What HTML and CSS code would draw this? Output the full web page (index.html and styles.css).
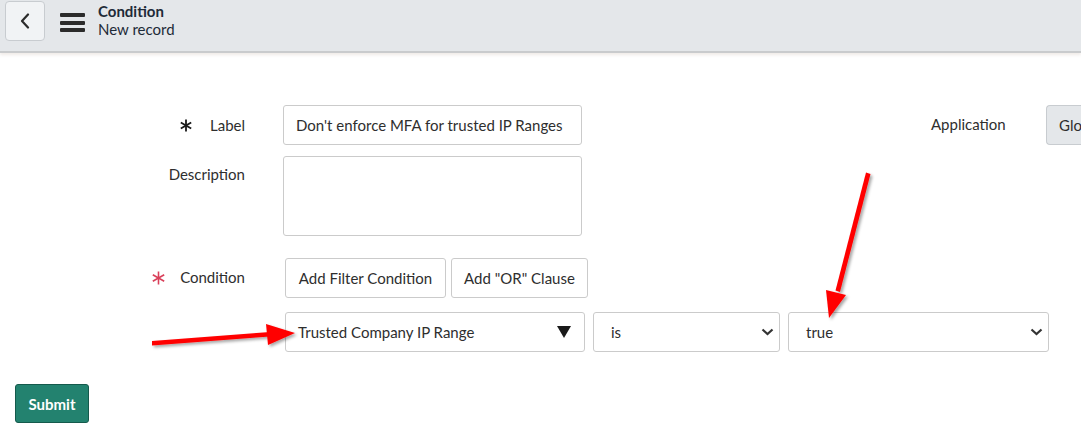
FILE: index.html
```html
<!DOCTYPE html>
<html lang="en">
<head>
<meta charset="utf-8">
<title>Condition - New record</title>
<link rel="stylesheet" href="styles.css">
</head>
<body>
<header class="header">
  <button class="back-btn" aria-label="Back">
    <svg width="10" height="16" viewBox="0 0 10 16"><path d="M8 1.5 L2 8 L8 14.5" fill="none" stroke="#2b2b2b" stroke-width="2.2" stroke-linecap="round" stroke-linejoin="round"/></svg>
  </button>
  <div class="menu-icon"><span></span><span></span><span></span></div>
  <div class="title">
    <div class="title-main">Condition</div>
    <div class="title-sub">New record</div>
  </div>
</header>

<main class="form">
  <div class="row row-label">
    <div class="label-cell"><svg class="mand" width="12" height="13" viewBox="0 0 12 13"><g stroke="#1a1a1a" stroke-width="1.8"><path d="M6 0.5 V12.5"/><path d="M0.8 3.5 L11.2 9.5"/><path d="M0.8 9.5 L11.2 3.5"/></g></svg>Label</div>
    <div class="field-cell"><div class="input">Don't enforce MFA for trusted IP Ranges</div></div>
    <div class="app-label">Application</div>
    <div class="app-box">Glo</div>
  </div>
  <div class="row row-desc">
    <div class="label-cell">Description</div>
    <div class="field-cell"><div class="textarea"></div></div>
  </div>
  <div class="row row-cond">
    <div class="label-cell"><svg class="mand mand-red" width="13" height="14" viewBox="0 0 13 14"><g stroke="#d9405a" stroke-width="1.6"><path d="M6.5 0.5 V13.5"/><path d="M0.8 3.7 L12.2 10.3"/><path d="M0.8 10.3 L12.2 3.7"/></g></svg>Condition</div>
    <div class="field-cell cond-cell">
      <div class="btn-row">
        <button class="btn btn-filter">Add Filter Condition</button>
        <button class="btn btn-or">Add "OR" Clause</button>
      </div>
    </div>
  </div>
  <div class="row row-select">
    <div class="label-cell"></div>
    <div class="field-cell cond-cell">
      <div class="select-row">
        <div class="select sel-field"><span>Trusted Company IP Range</span><svg class="tri" width="14" height="12" viewBox="0 0 14 12"><path d="M0 0 H14 L7 12 Z" fill="#1a1a1a"/></svg></div>
        <div class="select sel-op"><span>is</span><svg class="chev" width="13" height="8" viewBox="0 0 13 8"><path d="M1.5 1.5 L6.5 6 L11.5 1.5" fill="none" stroke="#333" stroke-width="2.2"/></svg></div>
        <div class="select sel-val"><span>true</span><svg class="chev" width="13" height="8" viewBox="0 0 13 8"><path d="M1.5 1.5 L6.5 6 L11.5 1.5" fill="none" stroke="#333" stroke-width="2.2"/></svg></div>
      </div>
    </div>
  </div>
  <div class="submit-row">
    <button class="submit">Submit</button>
  </div>
</main>

<svg class="arrows" width="1081" height="439" viewBox="0 0 1081 439">
  <defs>
    <filter id="sh" x="-20%" y="-20%" width="140%" height="140%">
      <feDropShadow dx="2" dy="2" stdDeviation="1.5" flood-color="#000" flood-opacity="0.35"/>
    </filter>
  </defs>
  <g filter="url(#sh)" fill="#ff0000" stroke="none">
    <path d="M152 341 L270 332 L270 336.5 L152 345.5 Z"/>
    <path d="M266 324 L295 333 L268 345 Z"/>
    <path d="M866 172.5 L870.5 174 L840 292 L835.5 290.5 Z"/>
    <path d="M826 290 L846 295 L829 318 Z"/>
  </g>
</svg>
</body>
</html>
```

FILE: styles.css
```css
html, body {
  margin: 0;
  padding: 0;
  background: #ffffff;
  overflow: hidden;
}
body {
  font-family: "Source Sans Pro", "Lato", "Liberation Sans", sans-serif;
  color: #2e2e2e;
  font-size: 15px;
  width: 1081px;
  height: 439px;
  position: relative;
}
button {
  font-family: inherit;
}

/* Header */
.header {
  height: 51px;
  background: #e4e7ea;
  border-bottom: 2px solid #c9cbcd;
  box-shadow: 0 2px 3px rgba(120, 80, 60, 0.12);
  display: flex;
  align-items: flex-start;
  padding-left: 5px;
  box-sizing: content-box;
}
.back-btn {
  width: 40px;
  height: 40px;
  margin-top: 1px;
  background: #f1f3f5;
  border: 1px solid #c8ccd0;
  border-radius: 4px;
  display: flex;
  align-items: center;
  justify-content: center;
  padding: 0;
}
.menu-icon {
  margin-left: 15px;
  margin-top: 13px;
  width: 25px;
  display: flex;
  flex-direction: column;
  gap: 3.5px;
}
.menu-icon span {
  display: block;
  height: 4px;
  background: #2b2b2b;
  border-radius: 1px;
}
.title {
  margin-left: 13px;
  margin-top: 2px;
  line-height: 18px;
  color: #1e2b38;
}
.title-main {
  font-weight: 700;
  font-size: 15px;
}
.title-sub {
  font-size: 15px;
}

/* Form */
.form {
  padding-top: 52px;
}
.row {
  display: flex;
  align-items: flex-start;
}
.label-cell {
  width: 245px;
  text-align: right;
  padding-top: 9px;
  line-height: 22px;
  font-size: 15px;
  color: #2e2e2e;
  flex-shrink: 0;
}
.mand {
  display: inline-block;
  vertical-align: -1px;
  margin-right: 18px;
}
.mand-red {
  margin-right: 15px;
  vertical-align: -2px;
}
.field-cell {
  margin-left: 38px;
  flex-shrink: 0;
}
.input {
  width: 299px;
  height: 40px;
  box-sizing: border-box;
  border: 1px solid #cbcbcb;
  border-radius: 3px;
  padding: 0 12px;
  line-height: 38px;
  font-size: 15px;
  white-space: nowrap;
  overflow: hidden;
}
.app-label {
  margin-left: 349px;
  width: 115px;
  flex-shrink: 0;
  padding-top: 8px;
  line-height: 22px;
}
.app-box {
  flex-shrink: 0;
  width: 40px;
  height: 40px;
  box-sizing: border-box;
  background: #e4e7ea;
  border: 1px solid #c8ccd0;
  border-right: none;
  border-radius: 4px 0 0 4px;
  padding-left: 12px;
  line-height: 38px;
  white-space: nowrap;
  overflow: hidden;
}
.row-desc {
  margin-top: 11px;
}
.row-desc .label-cell {
  padding-top: 7px;
}
.textarea {
  width: 299px;
  height: 80px;
  box-sizing: border-box;
  border: 1px solid #cbcbcb;
  border-radius: 3px;
}
.row-cond {
  margin-top: 22px;
}
.row-cond .label-cell {
  padding-top: 8px;
}
.cond-cell {
  padding-left: 2px;
}
.btn-row {
  display: flex;
  gap: 5px;
}
.btn {
  height: 40px;
  box-sizing: border-box;
  background: #ffffff;
  border: 1px solid #cbcbcb;
  border-radius: 3px;
  color: #2e2e2e;
  font-size: 15px;
  padding: 0;
}
.btn-filter { width: 161px; }
.btn-or { width: 137px; }
.row-select {
  margin-top: 14px;
}
.select-row {
  display: flex;
  gap: 8px;
}
.select {
  height: 40px;
  box-sizing: border-box;
  border: 1px solid #cbcbcb;
  border-radius: 3px;
  display: flex;
  align-items: center;
  justify-content: space-between;
  font-size: 15px;
}
.sel-field {
  width: 300px;
  padding: 0 13px 0 12px;
}
.tri {
  display: block;
  margin-bottom: 1px;
}
.sel-op {
  width: 187px;
  padding: 0 5px 0 17px;
}
.sel-val {
  width: 261px;
  padding: 0 5px 0 17px;
}
.chev {
  display: block;
}
.submit-row {
  margin-top: 32px;
  padding-left: 15px;
}
.submit {
  width: 74px;
  height: 39px;
  background: #23826f;
  border: 1px solid #155a4c;
  border-radius: 3px;
  color: #ffffff;
  font-weight: 700;
  font-size: 15px;
  padding: 0;
}

/* Annotation arrows overlaying the screenshot */
.arrows {
  position: absolute;
  left: 0;
  top: 0;
  pointer-events: none;
}
```
